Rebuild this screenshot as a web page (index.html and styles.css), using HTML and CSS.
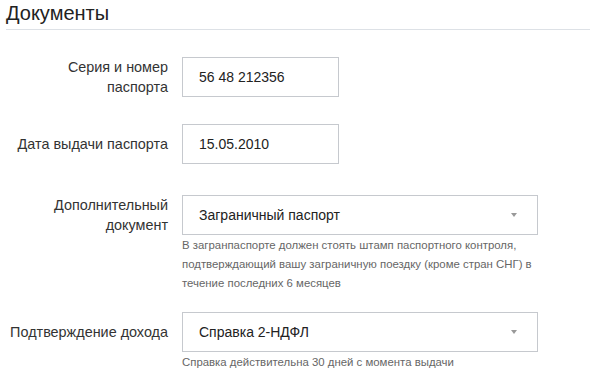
FILE: index.html
```html
<!DOCTYPE html>
<html lang="ru">
<head>
    <meta charset="UTF-8">
    <title>Документы</title>
    <link rel="stylesheet" href="styles.css">
</head>
<body>

    <div class="section">
        <h2 class="section-title">Документы</h2>

        <div class="field">
            <div class="label">Серия и номер<br>паспорта</div>
            <div class="control">
                <div class="box short">56 48 212356</div>
            </div>
        </div>

        <div class="field second">
            <div class="label">Дата выдачи паспорта</div>
            <div class="control">
                <div class="box short">15.05.2010</div>
            </div>
        </div>

        <div class="field with-hint">
            <div class="label">Дополнительный<br>документ</div>
            <div class="control">
                <div class="box wide select">
                    <span>Заграничный паспорт</span>
                    <span class="arrow"></span>
                </div>
                <p class="hint">В загранпаспорте должен стоять штамп паспортного контроля, подтверждающий вашу заграничную поездку (кроме стран СНГ) в течение последних 6 месяцев</p>
            </div>
        </div>

        <div class="field">
            <div class="label">Подтверждение дохода</div>
            <div class="control">
                <div class="box wide select">
                    <span>Справка 2-НДФЛ</span>
                    <span class="arrow"></span>
                </div>
                <p class="hint">Справка действительна 30 дней с момента выдачи</p>
            </div>
        </div>
    </div>

</body>
</html>
```

FILE: styles.css
```css
body {
    font-family: "Liberation Sans", Arial, sans-serif;
    color: #333;
    background: #fff;
    margin: 0;
    padding: 0 12px 0 6px;
}
.section-title {
    font-size: 20px;
    font-weight: normal;
    line-height: 24px;
    margin: 1px 0 0;
    padding-bottom: 4px;
    border-bottom: 1px solid #dde1e6;
    color: #222;
}
.field {
    display: flex;
    align-items: flex-start;
    margin-top: 27px;
}
.field.second + .field {
    margin-top: 31px;
}
.field.with-hint + .field {
    margin-top: 19px;
}
.label {
    width: 162px;
    height: 40px;
    margin-right: 14px;
    display: flex;
    align-items: center;
    justify-content: flex-end;
    text-align: right;
    font-size: 14.4px;
    line-height: 20px;
    color: #333;
}
.control {
    display: flex;
    flex-direction: column;
}
.box {
    box-sizing: border-box;
    height: 40px;
    border: 1px solid #c6c9ce;
    padding: 0 16px;
    display: flex;
    align-items: center;
    font-size: 14px;
    color: #222;
}
.short {
    width: 157px;
}
.wide {
    width: 356px;
}
.select {
    justify-content: space-between;
    padding-right: 20px;
}
.arrow {
    width: 0;
    height: 0;
    border-left: 3px solid transparent;
    border-right: 3px solid transparent;
    border-top: 4px solid #999;
}
.hint {
    width: 356px;
    margin: 1px 0 0;
    font-size: 11.4px;
    line-height: 19px;
    color: #666;
}
```
